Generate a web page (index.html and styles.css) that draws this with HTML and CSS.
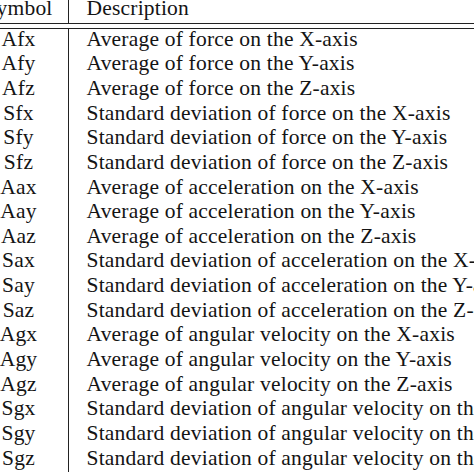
FILE: index.html
```html
<!DOCTYPE html>
<html>
<head>
<meta charset="utf-8">
<link rel="stylesheet" href="styles.css">
</head>
<body>
<div class="page">
<table class="feat">
<colgroup><col class="c-sym"><col class="c-desc"></colgroup>
<thead>
<tr><th class="sym">Symbol</th><th class="desc">Description</th></tr>
</thead>
<tbody>
<tr class="gap"><td></td><td></td></tr>
<tr class="first"><td class="sym">Afx</td><td class="desc">Average of force on the X-axis</td></tr>
<tr><td class="sym">Afy</td><td class="desc">Average of force on the Y-axis</td></tr>
<tr><td class="sym">Afz</td><td class="desc">Average of force on the Z-axis</td></tr>
<tr><td class="sym">Sfx</td><td class="desc">Standard deviation of force on the X-axis</td></tr>
<tr><td class="sym">Sfy</td><td class="desc">Standard deviation of force on the Y-axis</td></tr>
<tr><td class="sym">Sfz</td><td class="desc">Standard deviation of force on the Z-axis</td></tr>
<tr><td class="sym">Aax</td><td class="desc">Average of acceleration on the X-axis</td></tr>
<tr><td class="sym">Aay</td><td class="desc">Average of acceleration on the Y-axis</td></tr>
<tr><td class="sym">Aaz</td><td class="desc">Average of acceleration on the Z-axis</td></tr>
<tr><td class="sym">Sax</td><td class="desc">Standard deviation of acceleration on the X-axis</td></tr>
<tr><td class="sym">Say</td><td class="desc">Standard deviation of acceleration on the Y-axis</td></tr>
<tr><td class="sym">Saz</td><td class="desc">Standard deviation of acceleration on the Z-axis</td></tr>
<tr><td class="sym">Agx</td><td class="desc">Average of angular velocity on the X-axis</td></tr>
<tr><td class="sym">Agy</td><td class="desc">Average of angular velocity on the Y-axis</td></tr>
<tr><td class="sym">Agz</td><td class="desc">Average of angular velocity on the Z-axis</td></tr>
<tr><td class="sym">Sgx</td><td class="desc">Standard deviation of angular velocity on the X-axis</td></tr>
<tr><td class="sym">Sgy</td><td class="desc">Standard deviation of angular velocity on the Y-axis</td></tr>
<tr><td class="sym">Sgz</td><td class="desc">Standard deviation of angular velocity on the Z-axis</td></tr>
</tbody>
</table>
</div>
</body>
</html>
```
FILE: styles.css
```css
html, body {
  margin: 0;
  padding: 0;
  background: #ffffff;
}
.page {
  width: 474px;
  height: 474px;
  overflow: hidden;
}
.feat {
  margin-top: -2px;
  margin-left: -31px;
  width: 720px;
  table-layout: fixed;
  border-collapse: separate;
  border-spacing: 0;
  font-family: "Liberation Serif", "Times New Roman", serif;
  font-size: 21.5px;
  letter-spacing: 0.2px;
  line-height: 20px;
  color: #141414;
  white-space: nowrap;
}
.c-sym {
  width: 99px;
}
.c-desc {
  width: 621px;
}
.feat th, .feat td {
  padding: 0 0 4.65px 0;
  font-weight: normal;
  vertical-align: top;
  overflow: visible;
}
.feat .sym {
  text-align: center;
}
.feat .desc {
  text-align: left;
  padding-left: 17.5px;
  border-left: 1.3px solid #222222;
}
.feat thead th {
  padding-bottom: 4.7px;
  border-bottom: 1.3px solid #222222;
}
.feat tr.gap td {
  height: 4px;
  padding: 0;
  border: none;
}
.feat tr.first td {
  border-top: 1.3px solid #222222;
}
```
